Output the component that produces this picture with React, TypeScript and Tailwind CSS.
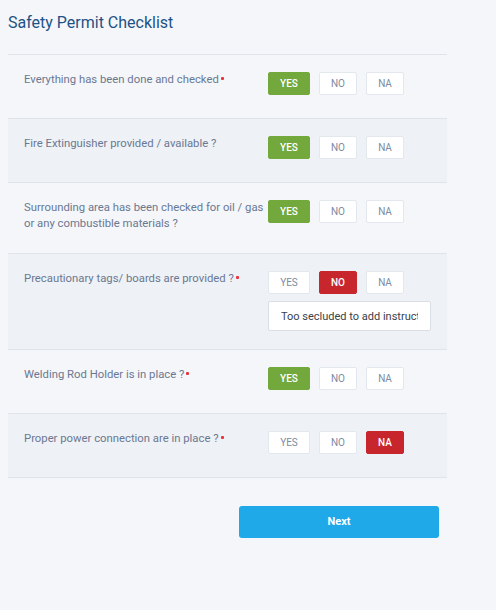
import { useState } from 'react';

type Answer = 'YES' | 'NO' | 'NA';

type Item = {
    label: string;
    required: boolean;
    answer: Answer;
    note?: string;
};

const items: Item[] = [
    { label: 'Everything has been done and checked', required: true, answer: 'YES' },
    { label: 'Fire Extinguisher provided / available ?', required: false, answer: 'YES' },
    { label: 'Surrounding area has been checked for oil / gas or any combustible materials ?', required: false, answer: 'YES' },
    { label: 'Precautionary tags/ boards are provided ?', required: true, answer: 'NO', note: 'Too secluded to add instructions' },
    { label: 'Welding Rod Holder is in place ?', required: true, answer: 'YES' },
    { label: 'Proper power connection are in place ?', required: true, answer: 'NA' },
];

const Choice = ({ value, selected, onClick }: { value: Answer; selected: boolean; onClick: () => void }) => {
    let look = 'bg-white text-[#7d8aa3] border-[#e3e7ee]';
    if (selected && value === 'YES') look = 'bg-[#72a83c] text-white border-[#72a83c] font-medium';
    if (selected && value !== 'YES') look = 'bg-[#c8262d] text-white border-[#c8262d] font-medium';
    return (
        <button
            onClick={onClick}
            className={`h-[23px] ${value === 'YES' ? 'w-[42px]' : 'w-[38px]'} border rounded-[2px] text-[10px] leading-none ${look}`}
        >
            {value}
        </button>
    );
};

const App = () => {
    const [answers, setAnswers] = useState<Answer[]>(items.map((i) => i.answer));

    return (
        <div className="min-h-[610px] bg-[#f4f6fa] font-['Roboto',sans-serif]">
            <h1 className="pl-2 pt-[10px] pb-[19px] text-[16px] leading-[25px] text-[#1e5285]">Safety Permit Checklist</h1>
            <div className="w-[439px] ml-2 border-t border-[#dfe4eb]">
                {items.map((item, i) => (
                    <div
                        key={i}
                        className={`flex min-h-[64px] pl-4 pt-[17px] pb-[18px] border-b border-[#dfe4eb] ${i % 2 === 1 ? 'bg-[#eef1f6]' : 'bg-[#f4f6fa]'}`}
                    >
                        <div className="w-[244px] pr-1 text-[11.3px] leading-[16px] text-[#6b7891] pb-[3px]">
                            {item.label}
                            {item.required && (
                                <span className="inline-block w-[3px] h-[3px] ml-[2px] mb-[4px] align-middle bg-[#e8323c] rounded-[1px]" />
                            )}
                        </div>
                        <div className="flex flex-col gap-[7px]">
                            <div className="flex gap-[9px]">
                                {(['YES', 'NO', 'NA'] as Answer[]).map((v) => (
                                    <Choice
                                        key={v}
                                        value={v}
                                        selected={answers[i] === v}
                                        onClick={() => setAnswers(answers.map((a, j) => (j === i ? v : a)))}
                                    />
                                ))}
                            </div>
                            {item.note && (
                                <input
                                    defaultValue={item.note}
                                    className="w-[163px] h-[30px] px-[12px] bg-white border border-[#d9dee7] rounded-[2px] text-[11px] text-[#3a3f4a] outline-none"
                                />
                            )}
                        </div>
                    </div>
                ))}
            </div>
            <div className="flex pl-[239px] pt-[28px]">
                <button className="w-[200px] h-[32px] rounded-[3px] bg-[#1fa9e9] text-white text-[11px] font-bold">Next</button>
            </div>
        </div>
    );
};

export default App;
